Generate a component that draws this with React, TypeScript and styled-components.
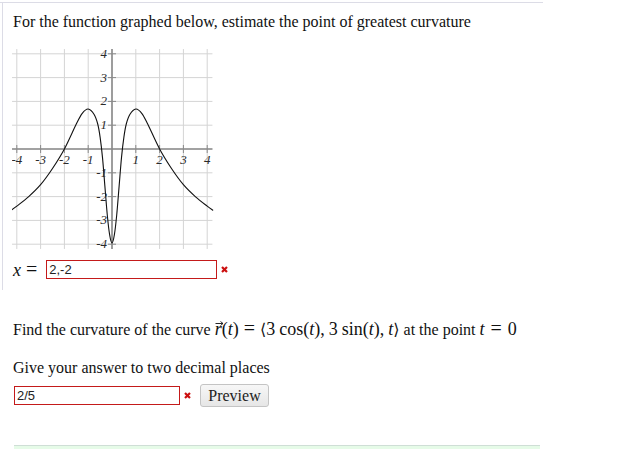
import { createGlobalStyle, styled } from "styled-components";

const GlobalStyle = createGlobalStyle`
  html, body {
    margin: 0;
    padding: 0;
    background: #fff;
  }
  body {
    font-family: "Liberation Serif", "DejaVu Serif", serif;
    font-size: 16px;
    color: #111;
  }
`;

// graph geometry
const UNIT = 23.8;
const X0 = 100;
const Y0 = 102;
const px = (x: number) => X0 + x * UNIT;
const py = (y: number) => Y0 - y * UNIT;

// right half of the curve, mirrored for the left
const half: [number, number][] = [
  [0, -3.95],
  [0.1, -3.6],
  [0.2, -2.75],
  [0.3, -1.55],
  [0.4, -0.35],
  [0.5, 0.5],
  [0.6, 1.05],
  [0.75, 1.45],
  [1.0, 1.68],
  [1.25, 1.5],
  [1.5, 1.05],
  [2.0, 0],
  [2.5, -0.82],
  [3.0, -1.5],
  [3.5, -2.0],
  [4.0, -2.4],
  [4.25, -2.58],
];

const curvePoints = (): [number, number][] => {
  const left = half
    .slice(1)
    .reverse()
    .map(([x, y]) => [-x, y] as [number, number]);
  return [...left, ...half].map(([x, y]) => [px(x), py(y)]);
};

const catmullRom = (pts: [number, number][]) => {
  let d = `M${pts[0][0].toFixed(2)},${pts[0][1].toFixed(2)}`;
  for (let i = 0; i < pts.length - 1; i++) {
    const p0 = pts[i - 1] || pts[i];
    const p1 = pts[i];
    const p2 = pts[i + 1];
    const p3 = pts[i + 2] || p2;
    const c1x = p1[0] + (p2[0] - p0[0]) / 6;
    const c1y = p1[1] + (p2[1] - p0[1]) / 6;
    const c2x = p2[0] - (p3[0] - p1[0]) / 6;
    const c2y = p2[1] - (p3[1] - p1[1]) / 6;
    d += ` C${c1x.toFixed(2)},${c1y.toFixed(2)} ${c2x.toFixed(2)},${c2y.toFixed(2)} ${p2[0].toFixed(2)},${p2[1].toFixed(2)}`;
  }
  return d;
};

const ticks = [-4, -3, -2, -1, 1, 2, 3, 4];
const gridVals = [-4, -3, -2, -1, 0, 1, 2, 3, 4];

const Graph = () => {
  const xmin = px(-4.2);
  const xmax = px(4.22);
  const ymin = py(4.2);
  const ymax = py(-4.2);
  return (
    <GraphSvg width="203" height="203" viewBox="0 0 203 203">
      {gridVals.map((v) => (
        <g key={v} stroke="#d4d4d4" strokeWidth="1">
          <line x1={px(v)} y1={ymin} x2={px(v)} y2={ymax} />
          <line x1={xmin} y1={py(v)} x2={xmax} y2={py(v)} />
        </g>
      ))}
      <g stroke="#8a8a8a" strokeWidth="1.6">
        <line x1={xmin} y1={Y0} x2={xmax} y2={Y0} />
        <line x1={X0} y1={ymin} x2={X0} y2={ymax} />
      </g>
      <g stroke="#8a8a8a" strokeWidth="1">
        {ticks.map((v) => (
          <g key={v}>
            <line x1={px(v)} y1={Y0 - 4} x2={px(v)} y2={Y0 + 4} />
            <line x1={X0 - 4} y1={py(v)} x2={X0 + 4} y2={py(v)} />
          </g>
        ))}
      </g>
      <path d={catmullRom(curvePoints())} fill="none" stroke="#111" strokeWidth="1.1" />
      <g fill="#2a2a2a" fontSize="13" fontStyle="italic" fontFamily="'Liberation Serif', serif">
        {ticks.map((v) => (
          <text key={`x${v}`} x={px(v)} y={Y0 + 15} textAnchor="middle">
            {v}
          </text>
        ))}
        {ticks.map((v) => (
          <text key={`y${v}`} x={X0 - 5} y={py(v) + 4} textAnchor="end">
            {v}
          </text>
        ))}
      </g>
    </GraphSvg>
  );
};

const ErrorMark = () => (
  <Mark width="7" height="7" viewBox="0 0 7 7">
    <path d="M1,1 L6,6 M6,1 L1,6" stroke="#cc1010" strokeWidth="2.2" />
    <rect x="2" y="2" width="3" height="3" fill="#cc1010" />
  </Mark>
);

const VectorR = () => (
  <Vec>
    <MathVar>r</MathVar>
    <VecArrow width="9" height="5" viewBox="0 0 9 5">
      <path d="M0.5,2.5 H8 M5.5,0.5 L8,2.5 L5.5,4.5" fill="none" stroke="#111" strokeWidth="0.9" />
    </VecArrow>
  </Vec>
);

export default function App() {
  return (
    <>
      <GlobalStyle />
      <Page>
        <TopRule />
        <ProblemBox>
          <Para>For the function graphed below, estimate the point of greatest curvature</Para>
          <Graph />
          <AnswerRow>
            <Math>
              <MathVar>x</MathVar>
              <Rel $gap={5}>=</Rel>
            </Math>
            <AnswerInput $width={171} defaultValue="2,-2" />
            <ErrorMark />
          </AnswerRow>
        </ProblemBox>
        <Section>
          <Para>
            Find the curvature of the curve{" "}
            <Math>
              <VectorR />(<MathVar>t</MathVar>)<Rel $gap={5}>=</Rel>
              <Angle>⟨</Angle>3<Thin />cos(<MathVar>t</MathVar>),<Thin />3<Thin />sin(<MathVar>t</MathVar>),
              <Thin />
              <MathVar>t</MathVar>
              <Angle>⟩</Angle>
            </Math>{" "}
            at the point{" "}
            <Math>
              <MathVar>t</MathVar>
              <Rel $gap={6}>=</Rel>0
            </Math>
          </Para>
          <Para $top={18}>Give your answer to two decimal places</Para>
          <SubmitRow>
            <AnswerInput $width={166} defaultValue="2/5" />
            <ErrorMark />
            <PreviewButton>Preview</PreviewButton>
          </SubmitRow>
        </Section>
        <BottomBand />
      </Page>
    </>
  );
}

// styles
const Page = styled.div`
  width: 623px;
  padding-top: 2px;
`;

const TopRule = styled.div`
  width: 543px;
  height: 1px;
  background: #dcdce6;
`;

const ProblemBox = styled.div`
  width: 530px;
  margin-left: 2px;
  border-left: 1px solid #dcdce6;
  padding: 9px 0 11px 10px;
`;

const Para = styled.p<{ $top?: number }>`
  margin: ${(p) => p.$top || 0}px 0 0;
  font-family: "Liberation Serif", "DejaVu Serif", serif;
  font-size: 16px;
  line-height: 20px;
  height: 20px;
  white-space: nowrap;
`;

const GraphSvg = styled.svg`
  display: block;
  margin: 15px 0 0 -1px;
`;

const AnswerRow = styled.div`
  display: flex;
  align-items: center;
  margin-top: 10px;
  height: 19px;
`;

const Math = styled.span`
  font-family: "Liberation Serif", "DejaVu Serif", serif;
  font-size: 18px;
  line-height: 16px;
  white-space: nowrap;
`;

const MathVar = styled.span`
  font-style: italic;
`;

const Rel = styled.span<{ $gap: number }>`
  display: inline-block;
  margin: 0 ${(p) => p.$gap}px;
  font-size: 20px;
  line-height: 16px;
`;

const Thin = styled.span`
  display: inline-block;
  width: 4px;
`;

const Angle = styled.span`
  font-family: "DejaVu Serif", serif;
  font-size: 16px;
`;

const Vec = styled.span`
  position: relative;
  display: inline-block;
`;

const VecArrow = styled.svg`
  position: absolute;
  left: 0;
  top: 0px;
`;

const AnswerInput = styled.input<{ $width: number }>`
  box-sizing: border-box;
  width: ${(p) => p.$width}px;
  height: 19px;
  margin: 0 0 0 4px;
  padding: 0 2px;
  border: 1px solid #c41a1a;
  border-radius: 0;
  font-family: "Liberation Sans", Arial, sans-serif;
  font-size: 13px;
  color: #222;
  outline: none;
`;

const Mark = styled.svg`
  display: block;
  margin-left: 4px;
`;

const Section = styled.div`
  padding: 30px 0 0 13px;
`;

const SubmitRow = styled.div`
  display: flex;
  align-items: center;
  margin-top: 6px;
  height: 23px;
  margin-left: -3px;
`;

const PreviewButton = styled.button`
  box-sizing: border-box;
  height: 23px;
  width: 69px;
  margin-left: 9px;
  padding: 0;
  border: 1px solid #c4c4c4;
  border-radius: 3px;
  background: linear-gradient(#f7f7f7, #e6e6e6);
  font-family: "Liberation Serif", serif;
  font-size: 16px;
  color: #222;
`;

const BottomBand = styled.div`
  margin: 38px 0 0 14px;
  width: 526px;
  height: 4px;
  border-top: 1px solid #cfded6;
  background: #e6fbe8;
`;
